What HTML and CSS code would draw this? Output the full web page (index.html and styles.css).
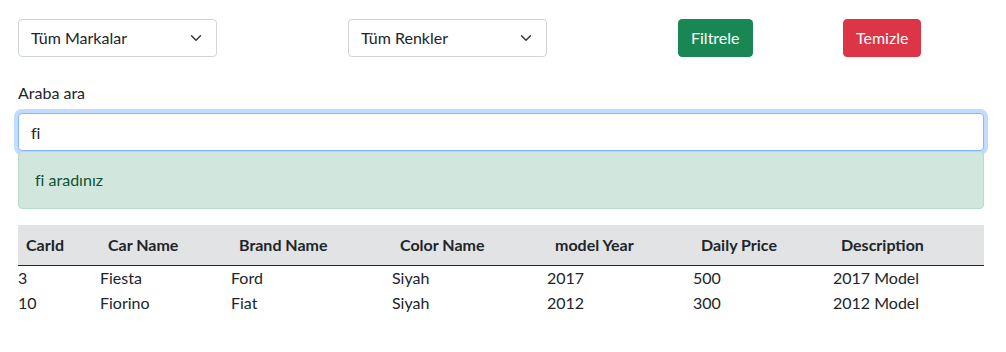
FILE: index.html
```html
<!DOCTYPE html>
<html lang="tr">
<head>
    <meta charset="UTF-8">
    <meta name="viewport" content="width=device-width, initial-scale=1.0">
    <title>Arabalar</title>
    <link rel="stylesheet" href="styles.css">
</head>
<body>
    <div class="container">
        <div class="filters">
            <div class="filter-col">
                <select class="form-select">
                    <option>Tüm Markalar</option>
                </select>
            </div>
            <div class="filter-col">
                <select class="form-select">
                    <option>Tüm Renkler</option>
                </select>
            </div>
            <div class="filter-col">
                <button type="button" class="btn btn-success">Filtrele</button>
            </div>
            <div class="filter-col">
                <button type="button" class="btn btn-danger">Temizle</button>
            </div>
        </div>

        <div class="search">
            <label for="filterText" class="form-label">Araba ara</label>
            <input type="text" id="filterText" class="form-control focused" value="fi">
        </div>

        <div class="alert alert-success">fi aradınız</div>

        <table class="table">
            <thead>
                <tr>
                    <th class="c-id">CarId</th>
                    <th class="c-name">Car Name</th>
                    <th class="c-brand">Brand Name</th>
                    <th class="c-color">Color Name</th>
                    <th class="c-year">model Year</th>
                    <th class="c-price">Daily Price</th>
                    <th>Description</th>
                </tr>
            </thead>
            <tbody>
                <tr>
                    <td>3</td>
                    <td>Fiesta</td>
                    <td>Ford</td>
                    <td>Siyah</td>
                    <td>2017</td>
                    <td>500</td>
                    <td>2017 Model</td>
                </tr>
                <tr>
                    <td>10</td>
                    <td>Fiorino</td>
                    <td>Fiat</td>
                    <td>Siyah</td>
                    <td>2012</td>
                    <td>300</td>
                    <td>2012 Model</td>
                </tr>
            </tbody>
        </table>
    </div>
</body>
</html>
```

FILE: styles.css
```css
body {
    margin: 0;
    font-family: Lato, "Open Sans", sans-serif;
    font-size: 16px;
    line-height: 24px;
    color: #212529;
    background: #fff;
}

.container {
    width: 966px;
    margin: 0 0 0 18px;
    padding-top: 19px;
}

.filters {
    display: grid;
    grid-template-columns: 330px 330px 165px 165px;
}

.form-select {
    display: block;
    width: 199px;
    height: 38px;
    padding: 6px 36px 6px 12px;
    font: inherit;
    color: #212529;
    background-color: #fff;
    background-image: url("data:image/svg+xml,%3csvg xmlns='http://www.w3.org/2000/svg' viewBox='0 0 16 16'%3e%3cpath fill='none' stroke='%23343a40' stroke-linecap='round' stroke-linejoin='round' stroke-width='2' d='M2 5l6 6 6-6'/%3e%3c/svg%3e");
    background-repeat: no-repeat;
    background-position: right 12px center;
    background-size: 16px 12px;
    border: 1px solid #ced4da;
    border-radius: 4px;
    appearance: none;
}

.btn {
    height: 38px;
    padding: 6px 12px;
    font: inherit;
    color: #fff;
    border: 1px solid transparent;
    border-radius: 4px;
    cursor: pointer;
}

.btn-success {
    background-color: #198754;
    border-color: #198754;
}

.btn-danger {
    background-color: #dc3545;
    border-color: #dc3545;
}

.search {
    margin-top: 24px;
}

.form-label {
    display: inline-block;
    margin-bottom: 8px;
}

.form-control {
    display: block;
    box-sizing: border-box;
    width: 100%;
    height: 38px;
    padding: 6px 12px;
    font: inherit;
    color: #212529;
    background: #fff;
    border: 1px solid #ced4da;
    border-radius: 4px;
    outline: none;
}

.form-control.focused {
    border-color: #86b7fe;
    box-shadow: 0 0 0 4px rgba(13, 110, 253, 0.25);
}

.alert {
    padding: 16px;
    margin-bottom: 16px;
    border: 1px solid transparent;
    border-radius: 4px;
}

.alert-success {
    color: #0f5132;
    background-color: #d1e7dd;
    border-color: #badbcc;
}

.table {
    width: 100%;
    table-layout: fixed;
    border-collapse: collapse;
}

.table thead {
    background-color: #e2e3e5;
}

.table th {
    box-sizing: border-box;
    padding: 8px;
    text-align: left;
    font-weight: 700;
    border-bottom: 1px solid #212529;
}

.table td {
    padding: 0;
    border-bottom: 1px solid #fff;
}

.c-id { width: 82px; }
.c-name { width: 131px; }
.c-brand { width: 161px; }
.c-color { width: 155px; }
.c-year { width: 146px; }
.c-price { width: 140px; }
```
